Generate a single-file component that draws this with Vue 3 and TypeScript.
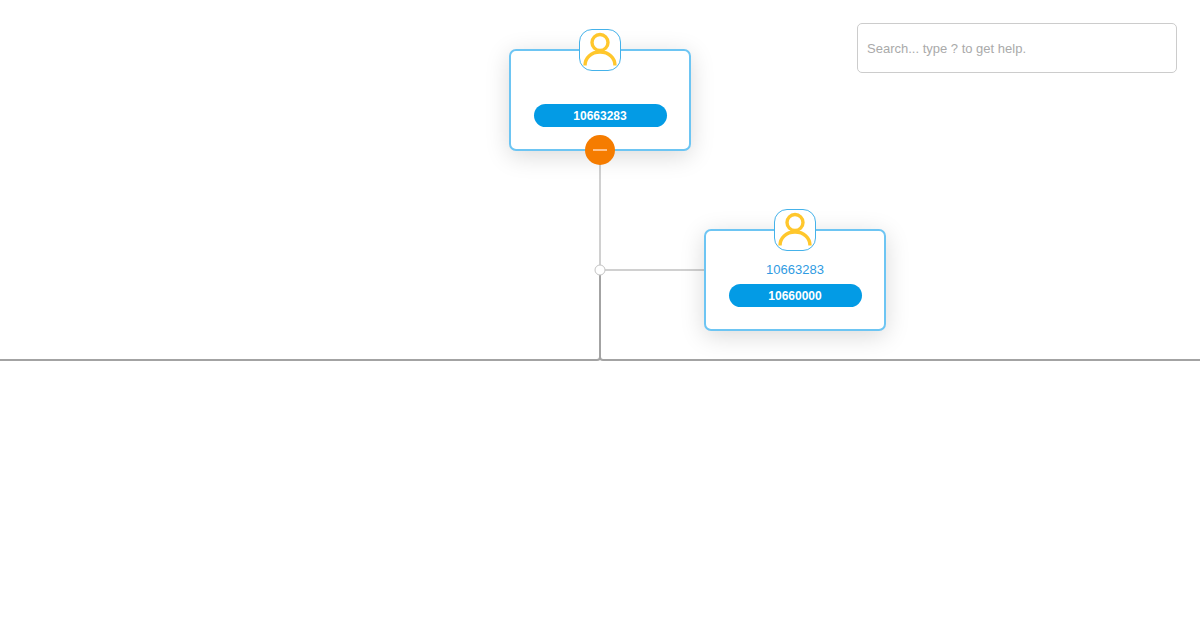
<script setup lang="ts">
interface NodeCard {
  id: number
  x: number
  y: number
  label: string
  value: string
}

const nodes: NodeCard[] = [
  { id: 1, x: 509, y: 49, label: '', value: '10663283' },
  { id: 2, x: 704, y: 229, label: '10663283', value: '10660000' },
]
const place = (n: NodeCard) => ({ left: `${n.x}px`, top: `${n.y}px` })
</script>

<template>
  <div class="page">
    <svg class="edges" width="1200" height="630" viewBox="0 0 1200 630" aria-hidden="true">
      <path class="edge" d="M600 150V265M605 270H705" />
      <path class="trunk" d="M600 275V357Q600 360 597 360H0M600 357Q600 360 603 360H1200" />
      <circle class="joint" cx="600" cy="270" r="5" />
    </svg>

    <div v-for="n in nodes" :key="n.id" class="card" :style="place(n)">
      <div class="avatar">
        <svg width="40" height="40" viewBox="0 0 40 40" fill="none">
          <circle cx="20" cy="12.5" r="8" />
          <path d="M5 35.5C5 28 11 22 20 22S35 28 35 35.5" />
        </svg>
      </div>
      <div class="label">{{ n.label }}</div>
      <div class="pill">{{ n.value }}</div>
    </div>

    <div class="collapse" style="left: 585px; top: 135px"><span class="minus"></span></div>

    <div class="toolbar">
      <input class="search" type="text" placeholder="Search... type ? to get help." />
    </div>
  </div>
</template>

<style>
html,
body {
  margin: 0;
  background: #fff;
}
</style>

<style scoped>
.page {
  position: relative;
  width: 1200px;
  height: 630px;
  overflow: hidden;
  font-family: "Liberation Sans", Arial, sans-serif;
  background: #fff;
}
.edges {
  position: absolute;
  left: 0;
  top: 0;
}
.edge,
.trunk {
  fill: none;
}
.edge {
  stroke: #d0d0d0;
  stroke-width: 2;
}
.trunk {
  stroke: #a3a3a3;
  stroke-width: 2;
}
.joint {
  fill: #fff;
  stroke: #c4c4c4;
  stroke-width: 1;
}
.card {
  position: absolute;
  box-sizing: border-box;
  width: 182px;
  height: 102px;
  display: flex;
  flex-direction: column;
  align-items: center;
  padding-top: 31px;
  background: #fff;
  border: 2px solid #6dc5f3;
  border-radius: 7px;
  box-shadow: 0 5px 25px rgba(0, 0, 0, 0.15);
}
.avatar {
  position: absolute;
  left: 68px;
  top: -22px;
  box-sizing: border-box;
  width: 42px;
  height: 42px;
  background: #fff;
  border: 1px solid #45b2ea;
  border-radius: 13px;
}
.avatar svg {
  display: block;
}
.avatar circle,
.avatar path {
  stroke: #ffc72c;
  stroke-width: 3.4;
}
.label {
  height: 15px;
  line-height: 15px;
  font-size: 13px;
  color: #2f9be2;
  white-space: nowrap;
}
.pill {
  box-sizing: border-box;
  width: 133px;
  height: 23px;
  margin-top: 7px;
  line-height: 25px;
  text-align: center;
  font-size: 12px;
  font-weight: 700;
  color: #fff;
  background: #039be5;
  border-radius: 12px;
}
.collapse {
  position: absolute;
  width: 30px;
  height: 30px;
  display: flex;
  align-items: center;
  justify-content: center;
  background: #f57c00;
  border-radius: 50%;
}
.minus {
  width: 14px;
  height: 2px;
  background: #ffc28a;
}
.toolbar {
  display: flex;
  justify-content: flex-end;
  padding: 23px 23px 0 0;
  position: relative;
}
.search {
  box-sizing: border-box;
  width: 320px;
  height: 50px;
  padding: 0 9px;
  font-family: inherit;
  font-size: 13px;
  color: #333;
  background: #fff;
  border: 1px solid #ccc;
  border-radius: 5px;
  outline: none;
}
.search::placeholder {
  color: #aaa;
  opacity: 1;
}
</style>
